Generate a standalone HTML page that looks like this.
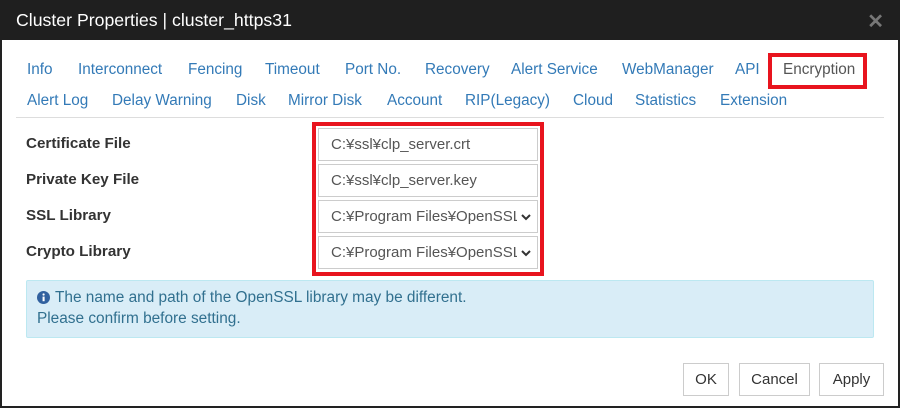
<!DOCTYPE html>
<html><head><meta charset="utf-8"><style>
*{margin:0;padding:0;box-sizing:border-box}
body{width:900px;height:408px;background:#fff;font-family:"Liberation Sans","Noto Sans CJK JP",sans-serif;position:relative;overflow:hidden;font-size:15.4px}
.a{position:absolute;white-space:nowrap}
.hdr{left:0;top:0;width:900px;height:40px;background:#1f1f1f;color:#fff;font-size:17.7px;line-height:40px;padding-left:16px}
.x{right:16px;top:9px;color:#777;font-size:20px;font-weight:bold}
.t{color:#337ab7;font-size:15.3px;line-height:18px}
.lbl{left:26px;font-weight:bold;color:#333;font-size:15.2px}
.inp{left:318px;width:220px;height:33px;border:1px solid #ccc;color:#555;font-size:15px;line-height:31px;padding-left:12px;background:#fff}
.chev{position:absolute;right:6px;top:12px}
.btn{top:363px;height:33px;border:1px solid #ccc;background:#fff;color:#333;font-size:15px;line-height:31px;text-align:center}
</style></head><body>
<div class="a hdr">Cluster Properties | cluster_https31</div>
<div class="a x">✕</div>
<div class="a" style="left:0;top:40px;width:2px;height:368px;background:#222"></div>
<div class="a" style="right:0;top:40px;width:2px;height:368px;background:#222"></div>
<div class="a" style="left:0;bottom:0;width:900px;height:2px;background:#222"></div>

<div class="a t" style="left:27px;top:61px">Info</div>
<div class="a t" style="left:78px;top:61px">Interconnect</div>
<div class="a t" style="left:188px;top:61px">Fencing</div>
<div class="a t" style="left:265px;top:61px">Timeout</div>
<div class="a t" style="left:345px;top:61px">Port No.</div>
<div class="a t" style="left:425px;top:61px">Recovery</div>
<div class="a t" style="left:511px;top:61px">Alert Service</div>
<div class="a t" style="left:622px;top:61px">WebManager</div>
<div class="a t" style="left:735px;top:61px">API</div>
<div class="a" style="left:768px;top:53px;width:99px;height:36px;border:4px solid #e8141e"></div>
<div class="a t" style="left:783px;top:61px;color:#555">Encryption</div>

<div class="a t" style="left:27px;top:92px">Alert Log</div>
<div class="a t" style="left:112px;top:92px">Delay Warning</div>
<div class="a t" style="left:236px;top:92px">Disk</div>
<div class="a t" style="left:288px;top:92px">Mirror Disk</div>
<div class="a t" style="left:387px;top:92px">Account</div>
<div class="a t" style="left:465px;top:92px">RIP(Legacy)</div>
<div class="a t" style="left:573px;top:92px">Cloud</div>
<div class="a t" style="left:635px;top:92px">Statistics</div>
<div class="a t" style="left:720px;top:92px">Extension</div>
<div class="a" style="left:16px;top:117px;width:868px;height:1px;background:#ddd"></div>

<div class="a lbl" style="top:135px">Certificate File</div>
<div class="a lbl" style="top:171px">Private Key File</div>
<div class="a lbl" style="top:207px">SSL Library</div>
<div class="a lbl" style="top:243px">Crypto Library</div>

<div class="a" style="left:312px;top:122px;width:232px;height:154px;border:4px solid #e8141e"></div>
<div class="a inp" style="top:128px">C:¥ssl¥clp_server.crt</div>
<div class="a inp" style="top:164px">C:¥ssl¥clp_server.key</div>
<div class="a inp" style="top:200px;overflow:hidden">C:¥Program Files¥OpenSSL<div style="position:absolute;right:0;top:0;width:20px;height:31px;background:#fff"></div><svg class="chev" width="10" height="8" viewBox="0 0 10 8"><path d="M1 2l4 4 4-4" stroke="#333" stroke-width="2" fill="none"/></svg></div>
<div class="a inp" style="top:236px;overflow:hidden">C:¥Program Files¥OpenSSL<div style="position:absolute;right:0;top:0;width:20px;height:31px;background:#fff"></div><svg class="chev" width="10" height="8" viewBox="0 0 10 8"><path d="M1 2l4 4 4-4" stroke="#333" stroke-width="2" fill="none"/></svg></div>

<div class="a" style="left:26px;top:280px;width:848px;height:58px;background:#d9edf7;border:1px solid #bce8f1;border-radius:2px"></div>
<svg class="a" style="left:37px;top:291px" width="13" height="13" viewBox="0 0 14 14"><circle cx="7" cy="7" r="7" fill="#31619f"/><rect x="6" y="6" width="2.2" height="5" fill="#fff"/><circle cx="7.1" cy="3.8" r="1.2" fill="#fff"/></svg>
<div class="a" style="left:55px;top:289px;color:#31708f;font-size:15.4px">The name and path of the OpenSSL library may be different.</div>
<div class="a" style="left:37px;top:310px;color:#31708f;font-size:15.4px">Please confirm before setting.</div>

<div class="a btn" style="left:683px;width:46px">OK</div>
<div class="a btn" style="left:739px;width:71px">Cancel</div>
<div class="a btn" style="left:819px;width:65px">Apply</div>
</body></html>
